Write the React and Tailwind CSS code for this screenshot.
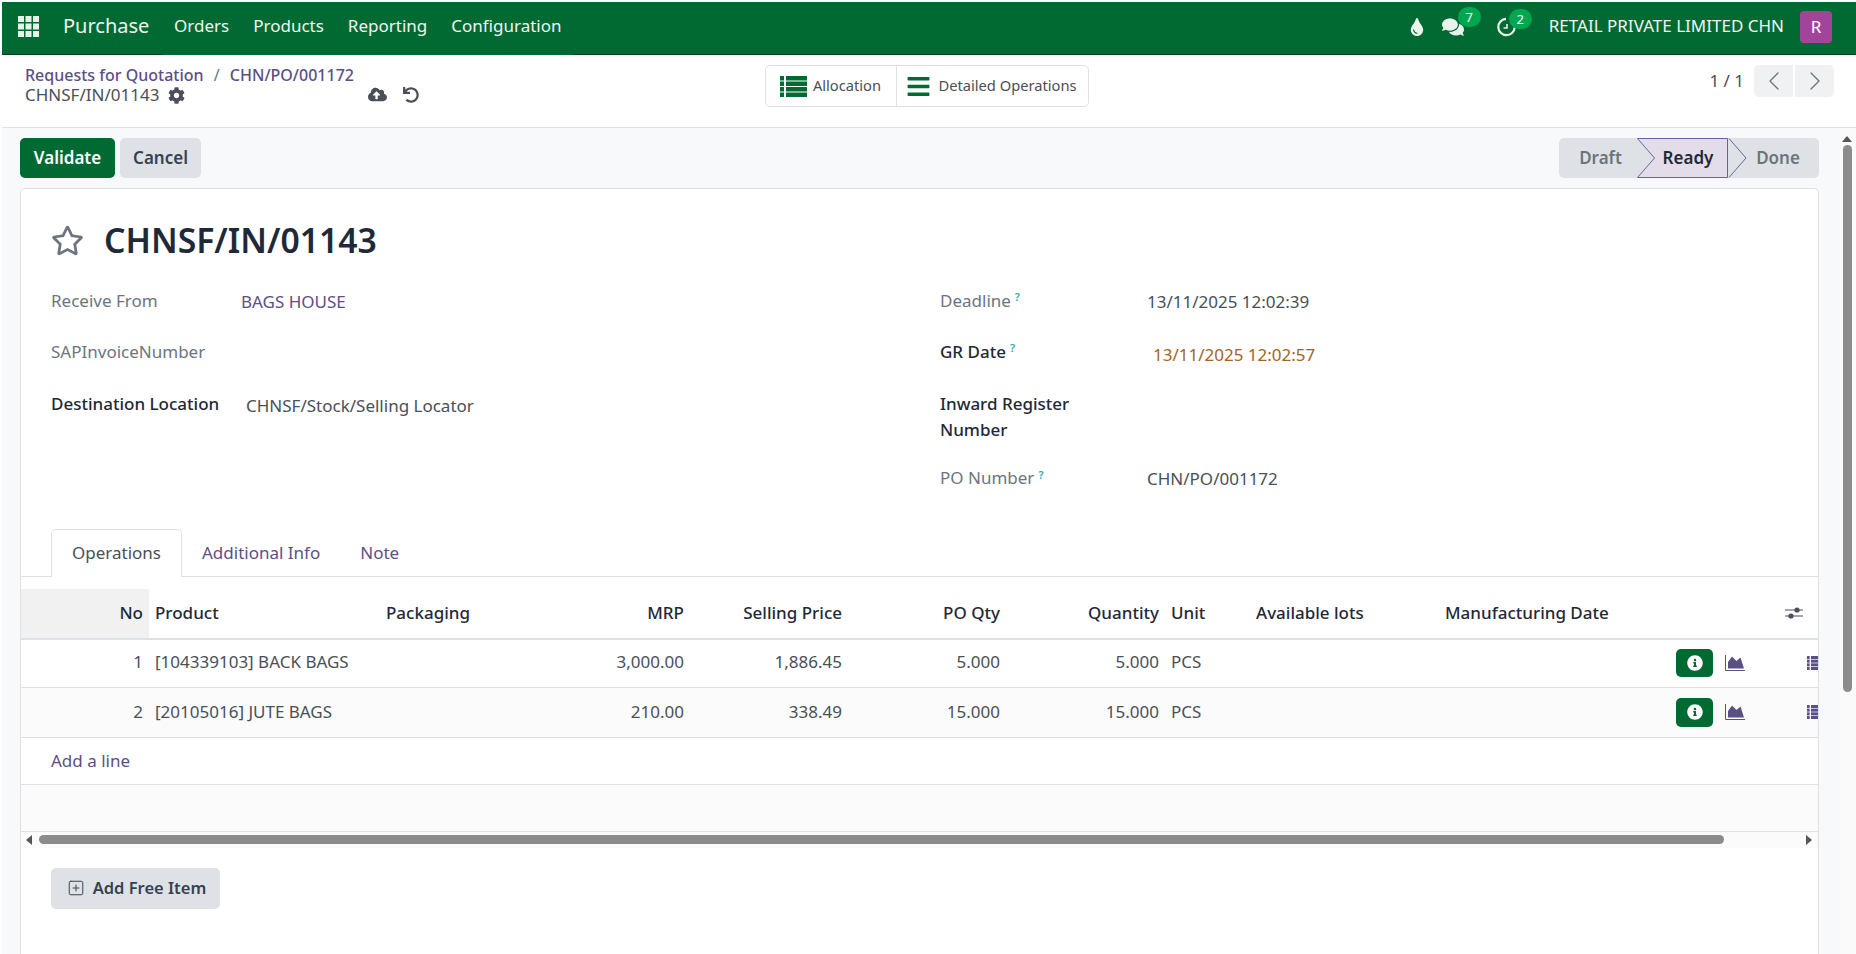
import { ChevronLeft, ChevronRight, SquarePlus } from 'lucide-react'
import { FaBars, FaCloudUploadAlt, FaCog, FaComments, FaInfoCircle, FaRegStar, FaTint, FaUndo } from 'react-icons/fa'

const rows = [
  { no: 1, product: '[104339103] BACK BAGS', mrp: '3,000.00', price: '1,886.45', po: '5.000', qty: '5.000', shade: 'bg-white', height: 'h-[48px]', btn: 'h-[28px]', td: 'px-[6px] pb-[3px]' },
  { no: 2, product: '[20105016] JUTE BAGS', mrp: '210.00', price: '338.49', po: '15.000', qty: '15.000', shade: 'bg-[#fbfbfb]', height: 'h-[50px]', btn: 'h-[29px]', td: 'px-[6px]' },
]

function GridIcon() {
  return (
    <svg width="21" height="21" viewBox="0 0 21 21" fill="#e9f1ea">
      {[0, 7.5, 15].map((y) =>
        [0, 7.5, 15].map((x) => <rect key={`${x}-${y}`} x={x} y={y} width="6" height="6" />),
      )}
    </svg>
  )
}

function ListIcon({ width, height, className }) {
  return (
    <svg width={width} height={height} viewBox="0 0 27 21" fill="currentColor" className={className}>
      {[0, 5.5, 11, 16.5].map((y) => (
        <g key={y}>
          <rect x="0" y={y} width="4" height="4.5" />
          <rect x="6" y={y} width="21" height="4.5" />
        </g>
      ))}
    </svg>
  )
}

function AreaChartIcon() {
  return (
    <svg width="20" height="16" viewBox="0 0 20 16" className="ml-[12px] shrink-0 text-[#5c4f86]" fill="currentColor">
      <path d="M0.5 0 V15.5 H20" fill="none" stroke="currentColor" strokeWidth="1" />
      <path d="M3 13.5 V7 L7 1.5 L11.5 6 L15.5 2.5 L19 13.5 Z" />
    </svg>
  )
}

function ClockIcon() {
  return (
    <svg width="21" height="20" viewBox="0 0 21 20" fill="none" stroke="#e8f3ec" strokeWidth="2.2">
      <path d="M9 1.8 A8.2 8.2 0 1 0 17.7 10.5" />
      <path d="M10 7 V11 H6.5" strokeWidth="1.6" />
    </svg>
  )
}

function NavBar() {
  return (
    <header className="h-[53px] shrink-0 flex items-center bg-[#016a32] border-b border-[#04401f] text-[#f1f5f2]">
      <div className="w-[60px] mb-[3px] pl-[16px]">
        <GridIcon />
      </div>
      <span className="w-[100px] mb-[4px] text-[20px] pl-[1px]">Purchase</span>
      <nav className="self-stretch -mb-px flex items-center border-b border-[#016a32] text-[17px] pl-[12px] pr-[12px] pb-[5px] gap-[24px]">
        <span>Orders</span>
        <span>Products</span>
        <span>Reporting</span>
        <span>Configuration</span>
      </nav>
      <div className="ml-auto mb-[3px] flex items-center pr-[24px]">
        <FaTint size={18} className="text-[#e8f3ec]" />
        <div className="relative ml-[16px]">
          <FaComments size={22} className="text-[#e8f3ec]" />
          <span className="absolute -top-[9px] left-[16px] w-[23px] h-[20px] rounded-full bg-[#00a650] text-white text-[13px] leading-[20px] text-center">7</span>
        </div>
        <div className="relative ml-[33px]">
          <ClockIcon />
          <span className="absolute -top-[8px] left-[12px] w-[23px] h-[20px] rounded-full bg-[#00a650] text-white text-[13px] leading-[20px] text-center">2</span>
        </div>
        <span className="ml-[31px] mb-[2px] text-[17px] whitespace-nowrap">RETAIL PRIVATE LIMITED CHN</span>
        <span className="ml-[16px] w-[32px] h-[32px] rounded-[4px] bg-[#a2459a] text-white text-[17px] flex items-center justify-center">R</span>
      </div>
    </header>
  )
}

function SubHeader() {
  return (
    <div className="h-[73px] shrink-0 bg-white border-b border-[#dee2e6] flex items-start text-[#495057]">
      <div className="w-[366px] pl-[23px] pt-[10px] leading-[20px]">
        <div className="whitespace-nowrap text-[16px] font-medium text-[#5c4f86]">
          Requests for Quotation <span className="text-[#6c757d] font-normal px-[6px]">/</span> CHN/PO/001172
        </div>
        <div className="flex items-center gap-[9px] text-[17px] whitespace-nowrap">
          CHNSF/IN/01143 <FaCog size={17} className="text-[#4a4f59]" />
        </div>
      </div>
      <div className="flex items-center gap-[16px] pt-[30px] text-[#4a4f59]">
        <FaCloudUploadAlt size={19} />
        <FaUndo size={16} />
      </div>
      <div className="ml-[346px] mt-[10px] h-[42px] flex items-center rounded-[5px] border border-[#dee2e6] text-[14.7px] text-[#4a4f59]">
        <div className="w-[131px] h-full flex items-center justify-center gap-[6px] pr-[1px] border-r border-[#dee2e6]">
          <ListIcon width={27} height={21} className="text-[#016a32]" />
          <span className="mb-[2px]">Allocation</span>
        </div>
        <div className="w-[191px] h-full flex items-center justify-center gap-[7px] pr-[2px]">
          <FaBars size={25} className="text-[#016a32]" />
          <span className="mb-[2px]">Detailed Operations</span>
        </div>
      </div>
      <div className="ml-auto mr-[22px] mt-[10px] flex items-center">
        <span className="text-[17px] mr-[10px] mb-[1px]">1 / 1</span>
        <span className="w-[39px] h-[32px] bg-[#f0f1f2] rounded-l-[5px] flex items-center justify-center mr-[2px]">
          <ChevronLeft size={32} strokeWidth={1} className="text-[#6c757d]" />
        </span>
        <span className="w-[39px] h-[32px] bg-[#f0f1f2] rounded-r-[5px] flex items-center justify-center">
          <ChevronRight size={32} strokeWidth={1} className="text-[#6c757d]" />
        </span>
      </div>
    </div>
  )
}

function StatusBar() {
  return (
    <div className="flex items-center justify-between h-[40px]">
      <div className="flex gap-[5px] text-[17px] font-semibold">
        <button className="w-[95px] h-[40px] rounded-[5px] bg-[#016a32] text-white">Validate</button>
        <button className="w-[81px] h-[40px] rounded-[5px] bg-[#dee2e6] text-[#374151]">Cancel</button>
      </div>
      <div className="flex h-[40px] rounded-[5px] bg-[#dee2e6] text-[17px] font-semibold text-[#6c757d]">
        <span className="w-[78px] pl-[5px] flex items-center justify-center">Draft</span>
        <span className="relative w-[90px] pl-[12px] flex items-center justify-center text-[#1f2937]">
          <svg className="absolute left-0 top-0" width="110" height="40" viewBox="0 0 110 40" fill="none" stroke="#6f5fa0">
            <path d="M0.5 0.5 H90.5 V39.5 H0.5 L17.5 20 Z" fill="#e2dde9" />
            <path d="M92 0.5 L109 20 L92 39.5" />
          </svg>
          <span className="relative">Ready</span>
        </span>
        <span className="w-[92px] pl-[10px] flex items-center justify-center">Done</span>
      </div>
    </div>
  )
}

function Field({ label, strong, hint, value, valueClass = 'text-[#495057] mt-[2px]', rowClass = 'h-[51px]', labelWidth }) {
  return (
    <div className={`flex items-center ${rowClass}`}>
      <div className={`${labelWidth} shrink-0 leading-[26px] ${strong ? 'font-medium text-[#1f2937]' : 'text-[#6c757d]'}`}>
        {label}
        {hint && <sup className="ml-[4px] text-[11px] text-[#35a5c5] font-semibold">?</sup>}
      </div>
      {value && <div className={valueClass}>{value}</div>}
    </div>
  )
}

function FormSection() {
  return (
    <div className="flex px-[30px]">
      <div className="w-[889px]">
        <Field label="Receive From" value="BAGS HOUSE" valueClass="text-[#5c4f86] mt-[2px]" labelWidth="w-[190px]" />
        <Field label="SAPInvoiceNumber" labelWidth="w-[190px]" />
        <Field label="Destination Location" strong value="CHNSF/Stock/Selling Locator" valueClass="text-[#495057] mt-[4px]" rowClass="h-[53px]" labelWidth="w-[195px]" />
      </div>
      <div className="flex-1">
        <Field label="Deadline" hint value="13/11/2025 12:02:39" labelWidth="w-[207px]" />
        <Field label="GR Date" strong hint value="13/11/2025 12:02:57" valueClass="text-[#a0661c] mt-[6px]" labelWidth="w-[213px]" />
        <Field label={<>Inward Register<br />Number</>} strong rowClass="h-[79px]" labelWidth="w-[207px]" />
        <Field label="PO Number" hint value="CHN/PO/001172" valueClass="text-[#495057] mt-[1px]" rowClass="h-[44px]" labelWidth="w-[207px]" />
      </div>
    </div>
  )
}

function Tabs() {
  return (
    <div className="mt-[29px] h-[48px] flex border-b border-[#dee2e6] pl-[30px]">
      <div className="w-[131px] h-[48px] pb-[2px] bg-white border border-b-0 border-[#dee2e6] rounded-t-[5px] flex items-center justify-center text-[#495057]">
        Operations
      </div>
      <div className="ml-[20px] h-[47px] flex items-center text-[#5c4f86]">Additional Info</div>
      <div className="ml-[40px] h-[47px] flex items-center text-[#5c4f86]">Note</div>
    </div>
  )
}

function LinesTable() {
  const th = 'px-[6px] pb-[2px] font-medium text-[#1f2937]'
  return (
    <div className="mt-[12px] overflow-hidden">
      <table className="table-fixed w-[1797px] border-collapse text-[#495057]">
        <colgroup>
          <col className="w-[128px]" />
          <col className="w-[231px]" />
          <col className="w-[150px]" />
          <col className="w-[160px]" />
          <col className="w-[158px]" />
          <col className="w-[158px]" />
          <col className="w-[159px]" />
          <col className="w-[85px]" />
          <col className="w-[189px]" />
          <col />
        </colgroup>
        <thead>
          <tr className="h-[50px] border-b-2 border-[#dee2e6]">
            <th className={`${th} text-right bg-[#f1f1f1]`}>No</th>
            <th className={`${th} text-left`}>Product</th>
            <th className={`${th} text-left`}>Packaging</th>
            <th className={`${th} text-right`}>MRP</th>
            <th className={`${th} text-right`}>Selling Price</th>
            <th className={`${th} text-right`}>PO Qty</th>
            <th className={`${th} text-right`}>Quantity</th>
            <th className={`${th} text-left`}>Unit</th>
            <th className={`${th} text-left`}>Available lots</th>
            <th className={`${th} text-left whitespace-nowrap`}>
              <div className="flex items-center justify-between pr-[9px]">
                Manufacturing Date
                <svg width="18" height="12" viewBox="0 0 18 12" fill="#4a4f59" stroke="#4a4f59" strokeWidth="1.2">
                  <path d="M0 3 H18 M0 9 H18" />
                  <circle cx="12" cy="3" r="2.6" stroke="none" />
                  <circle cx="6" cy="9" r="2.6" stroke="none" />
                </svg>
              </div>
            </th>
          </tr>
        </thead>
        <tbody>
          {rows.map((r) => (
            <tr key={r.no} className={`${r.height} border-b border-[#dee2e6] ${r.shade}`}>
              <td className={`${r.td} text-right`}>{r.no}</td>
              <td className={`${r.td} whitespace-nowrap`}>{r.product}</td>
              <td className={r.td}></td>
              <td className={`${r.td} text-right`}>{r.mrp}</td>
              <td className={`${r.td} text-right`}>{r.price}</td>
              <td className={`${r.td} text-right`}>{r.po}</td>
              <td className={`${r.td} text-right`}>{r.qty}</td>
              <td className={r.td}>PCS</td>
              <td className={r.td}></td>
              <td className="pl-[237px] whitespace-nowrap overflow-hidden">
                <div className="flex items-center w-[160px]">
                  <span className={`w-[37px] ${r.btn} rounded-[5px] bg-[#016a32] flex items-center justify-center`}>
                    <FaInfoCircle size={16} className="text-white" />
                  </span>
                  <AreaChartIcon />
                  <ListIcon width={18} height={14} className="ml-[62px] shrink-0 text-[#5c4f86]" />
                </div>
              </td>
            </tr>
          ))}
          <tr className="h-[47px] border-b border-[#dee2e6] bg-white">
            <td colSpan={10} className="pl-[30px] text-[#5c4f86]">Add a line</td>
          </tr>
          <tr className="h-[47px] border-b border-[#dee2e6] bg-[#fbfbfb]">
            <td colSpan={10}></td>
          </tr>
        </tbody>
      </table>
      <div className="h-[16px] flex items-center bg-[#fbfbfb] pl-[5px]">
        <svg width="6" height="10" viewBox="0 0 6 10" fill="#555"><path d="M6 0 V10 L0 5 Z" /></svg>
        <div className="ml-[7px] w-[1685px] h-[9px] rounded-full bg-[#8c8c8c]"></div>
        <svg className="ml-[82px]" width="6" height="10" viewBox="0 0 6 10" fill="#555"><path d="M0 0 V10 L6 5 Z" /></svg>
      </div>
    </div>
  )
}

export default function App() {
  return (
    <div className="h-[954px] w-[1856px] overflow-hidden bg-white pt-[2px] pl-[2px] flex flex-col font-['Noto_Sans',sans-serif] text-[17px]">
      <NavBar />
      <SubHeader />
      <div className="flex-1 flex min-h-0">
        <main className="flex-1 min-w-0 bg-[#f8f9fa] pl-[18px] pr-[20px] pt-[10px]">
          <StatusBar />
          <section className="mt-[10px] h-[800px] bg-white border border-[#dee2e6] rounded-t-[5px]">
            <div className="h-[86px] pt-[16px] flex items-center pl-[30px]">
              <FaRegStar size={33} className="text-[#6c757d]" />
              <h1 className="ml-[20px] text-[33.7px] font-semibold text-[#1f2937]">CHNSF/IN/01143</h1>
            </div>
            <FormSection />
            <Tabs />
            <LinesTable />
            <button className="ml-[30px] mt-[20px] w-[169px] h-[41px] pl-[2px] rounded-[5px] bg-[#dee2e6] text-[#374151] font-semibold text-[16.5px] flex items-center justify-center gap-[8px]">
              <SquarePlus size={18} strokeWidth={1.3} />
              Add Free Item
            </button>
          </section>
        </main>
        <aside className="w-[17px] shrink-0 bg-[#fafafa] flex flex-col items-center pt-[8px] pr-[1px]">
          <svg width="10" height="6" viewBox="0 0 10 6" fill="#555"><path d="M0 6 H10 L5 0 Z" /></svg>
          <div className="mt-[3px] w-[9px] h-[547px] rounded-full bg-[#8c8c8c]"></div>
        </aside>
      </div>
    </div>
  )
}
